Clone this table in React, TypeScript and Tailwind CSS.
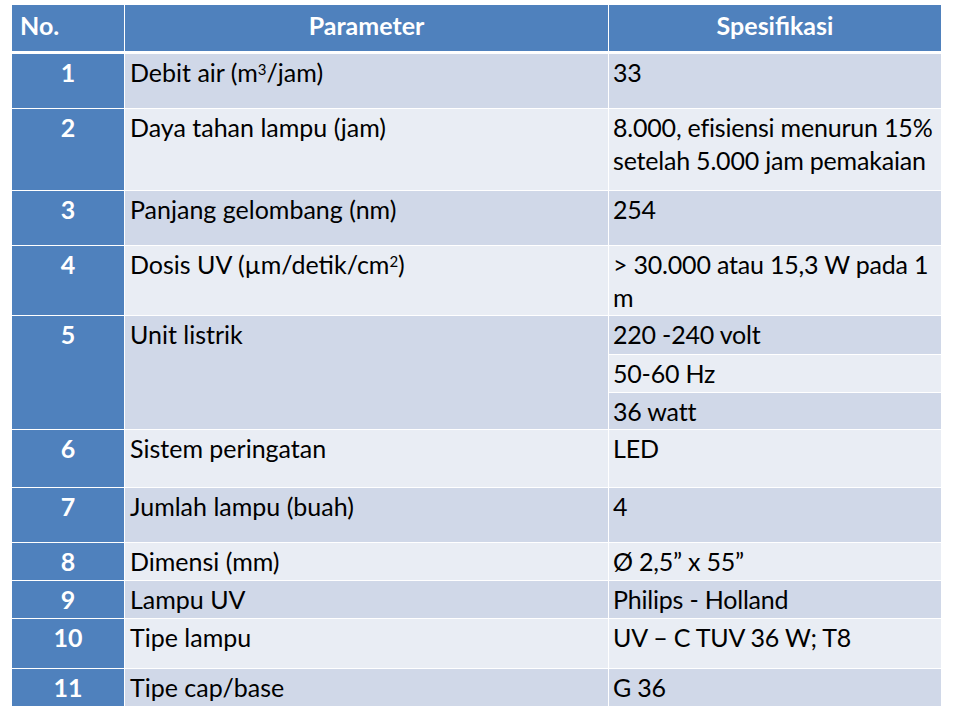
import React from "react";

type Row = {
    no: string;
    param: React.ReactNode;
    spec: React.ReactNode;
    h: string;
    dark: boolean;
};

const rows: Row[] = [
    { no: "1", param: <>Debit air (m<sup className="text-[15px] leading-none">3</sup>/jam)</>, spec: "33", h: "h-[54px]", dark: true },
    { no: "2", param: "Daya tahan lampu (jam)", spec: <>8.000, efisiensi menurun 15%<br />setelah 5.000 jam pemakaian</>, h: "h-[81px]", dark: false },
    { no: "3", param: "Panjang gelombang (nm)", spec: "254", h: "h-[54px]", dark: true },
    { no: "4", param: <>Dosis UV (µm/detik/cm<sup className="text-[15px] leading-none">2</sup>)</>, spec: <>&gt; 30.000 atau 15,3 W pada 1<br />m</>, h: "h-[69px]", dark: false },
];

const rowsAfter: Row[] = [
    { no: "6", param: "Sistem peringatan", spec: "LED", h: "h-[57px]", dark: false },
    { no: "7", param: "Jumlah lampu (buah)", spec: "4", h: "h-[54px]", dark: true },
    { no: "8", param: "Dimensi (mm)", spec: "Ø 2,5” x 55”", h: "h-[37px]", dark: false },
    { no: "9", param: "Lampu UV", spec: "Philips - Holland", h: "h-[37px]", dark: true },
    { no: "10", param: "Tipe lampu", spec: "UV – C TUV 36 W; T8", h: "h-[49px]", dark: false },
    { no: "11", param: "Tipe cap/base", spec: "G 36", h: "h-[37px]", dark: true },
];

function TableRow({ row }: { row: Row }) {
    const bg = row.dark ? "bg-[#d0d8e8]" : "bg-[#e9edf4]";
    return (
        <div className={`flex gap-px ${row.h}`}>
            <div className="w-[112px] shrink-0 bg-[#4f81bd] pt-[2px] text-center font-bold text-white">
                {row.no}
            </div>
            <div className={`w-[483px] shrink-0 ${bg} pl-[5px] pt-[2px]`}>{row.param}</div>
            <div className={`w-[332px] shrink-0 ${bg} pl-[4px] pt-[2px] whitespace-nowrap tracking-[-0.2px]`}>{row.spec}</div>
        </div>
    );
}

export default function App() {
    return (
        <div className="min-h-[720px] w-[960px] bg-white pt-[5px] pl-[12px] font-['Lato',sans-serif] text-[25px] leading-[33px] text-black">
            <div className="flex w-[929px] flex-col gap-px bg-white">
                <div className="mb-[2px] flex h-[46px] gap-px font-bold text-white">
                    <div className="w-[112px] shrink-0 bg-[#4f81bd] pl-[8px] pt-[4px]">No.</div>
                    <div className="w-[483px] shrink-0 bg-[#4f81bd] pt-[4px] text-center">Parameter</div>
                    <div className="w-[332px] shrink-0 bg-[#4f81bd] pt-[4px] text-center">Spesifikasi</div>
                </div>
                {rows.map((r) => (
                    <TableRow key={r.no} row={r} />
                ))}
                <div className="flex h-[113px] gap-px">
                    <div className="w-[112px] shrink-0 bg-[#4f81bd] pt-[2px] text-center font-bold text-white">5</div>
                    <div className="w-[483px] shrink-0 bg-[#d0d8e8] pl-[5px] pt-[2px]">Unit listrik</div>
                    <div className="flex w-[332px] shrink-0 flex-col gap-px tracking-[-0.2px]">
                        <div className="h-[38px] bg-[#d0d8e8] pl-[4px] pt-[2px]">220 -240 volt</div>
                        <div className="h-[37px] bg-[#e9edf4] pl-[4px] pt-[2px]">50-60 Hz</div>
                        <div className="h-[36px] bg-[#d0d8e8] pl-[4px] pt-[2px]">36 watt</div>
                    </div>
                </div>
                {rowsAfter.map((r) => (
                    <TableRow key={r.no} row={r} />
                ))}
            </div>
        </div>
    );
}
